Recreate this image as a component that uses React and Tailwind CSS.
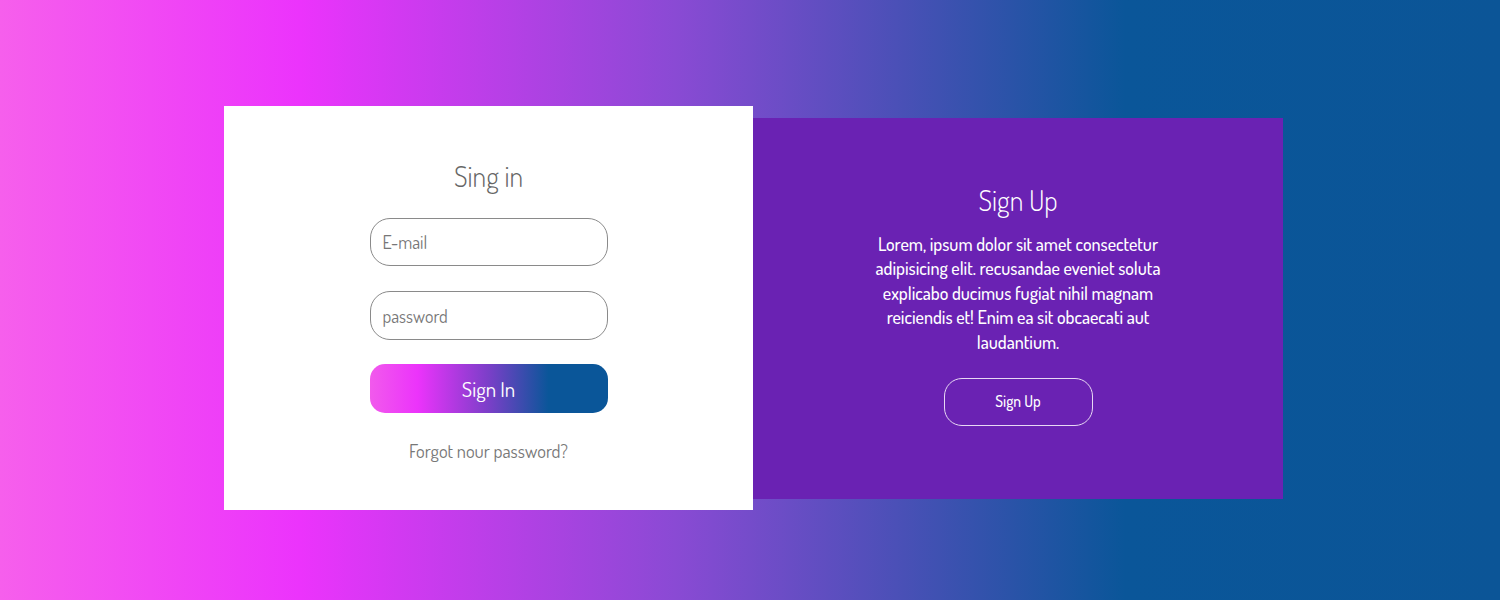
export default function App() {
  const font = { fontFamily: "Dosis, 'Liberation Sans Narrow', 'DejaVu Sans Condensed', sans-serif" };

  return (
    <div
      className="w-full h-[600px] flex items-center justify-center bg-[linear-gradient(to_right,#f65fec_0%,#ec33fc_20%,#8a4ad4_45%,#0a5699_75%,#0b5597_100%)]"
      style={font}
    >
      <div className="flex items-center ml-[7px] mt-[16px]">
        {/* Sign in card */}
        <div className="w-[529px] h-[404px] bg-white flex flex-col items-center pt-[54px]">
          <h2 className="text-[28px] leading-[32px] font-light text-[#666]">Sing in</h2>
          <input
            type="text"
            placeholder="E-mail"
            className="mt-[26px] w-[238px] h-[48px] rounded-[20px] border-[1.5px] border-[#8a8a8a] px-3 text-[18px] text-[#555] placeholder:text-[#777] outline-none"
          />
          <input
            type="password"
            placeholder="password"
            className="mt-[25px] w-[238px] h-[49px] rounded-[20px] border-[1.5px] border-[#8a8a8a] px-3 text-[18px] text-[#555] placeholder:text-[#777] outline-none"
          />
          <button className="mt-[24px] w-[238px] h-[49px] rounded-[15px] text-white text-[21px] bg-[linear-gradient(to_right,#f15aec_0%,#ec33fb_20%,#7a3fc8_50%,#0a5699_75%,#0a5699_100%)]">
            Sign In
          </button>
          <a className="mt-[24px] text-[18.5px] text-[#777]">Forgot nour password?</a>
        </div>

        {/* Sign up panel */}
        <div className="w-[530px] h-[381px] bg-[#6a22b3] flex flex-col items-center pt-[66px] text-white">
          <h2 className="text-[28px] leading-[32px] font-light">Sign Up</h2>
          <p className="mt-[16px] w-[300px] text-center text-[18px] leading-[24.5px] font-medium">
            Lorem, ipsum dolor sit amet consectetur adipisicing elit. recusandae eveniet soluta explicabo ducimus fugiat nihil magnam reiciendis et! Enim ea sit obcaecati aut laudantium.
          </p>
          <button className="mt-[24px] w-[149px] h-[48px] rounded-[18px] border-[1.5px] border-[#e8d8f4] text-[15.5px] font-medium text-white">
            Sign Up
          </button>
        </div>
      </div>
    </div>
  );
}
